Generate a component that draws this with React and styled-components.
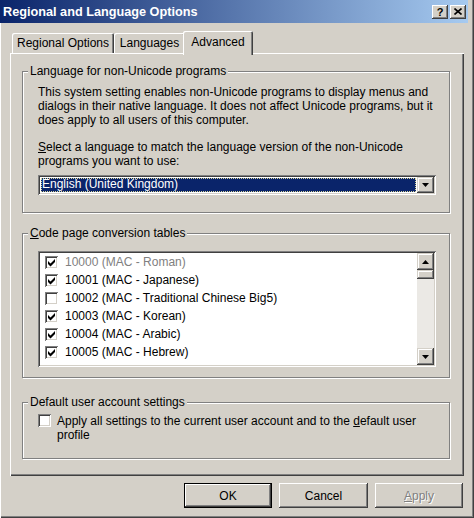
import React from 'react';
import styled, { createGlobalStyle } from 'styled-components';

const FACE = '#d4d0c8';

const GlobalStyle = createGlobalStyle`
  html, body {
    margin: 0;
    padding: 0;
    background: ${FACE};
  }
  body {
    font-family: "Liberation Sans", Arial, sans-serif;
    font-size: 12px;
    color: #000;
  }
`;

// classic 3D edges
const raised = `
  box-shadow: inset -1px -1px 0 #404040, inset 1px 1px 0 #ffffff, inset -2px -2px 0 #808080;
`;
const sunken = `
  box-shadow: inset 1px 1px 0 #808080, inset -1px -1px 0 #ffffff, inset 2px 2px 0 #404040, inset -2px -2px 0 ${FACE};
`;

const Window = styled.div`
  box-sizing: border-box;
  width: 474px;
  height: 518px;
  background: ${FACE};
  display: flex;
  flex-direction: column;
  padding: 0 6px 3px 0;
  box-shadow: inset 1px 0 0 #ffffff, inset -1px -1px 0 #404040, inset -2px -2px 0 #808080;
`;

const TitleBar = styled.div`
  height: 23px;
  display: flex;
  align-items: center;
  padding: 0 2px 0 3px;
  background: linear-gradient(to right, #0a246a, #a6caf0);
`;

const Title = styled.div`
  flex: 1;
  color: #fff;
  font-weight: bold;
  font-size: 12.7px;
  white-space: nowrap;
`;

const CaptionButton = styled.div`
  box-sizing: border-box;
  width: 16px;
  height: 14px;
  margin-left: 2px;
  background: ${FACE};
  ${raised}
  display: flex;
  align-items: center;
  justify-content: center;
  font-weight: bold;
  font-size: 11px;
  line-height: 14px;
`;

const Body = styled.div`
  flex: 1;
  display: flex;
  flex-direction: column;
  padding: 8px 4px 0 10px;
`;

const TabStrip = styled.div`
  height: 22px;
  display: flex;
  align-items: flex-end;
  padding-left: 2px;
  position: relative;
  z-index: 1;
`;

const Tab = styled.div`
  box-sizing: border-box;
  width: ${p => p.$width}px;
  height: ${p => (p.$active ? 24 : 20)}px;
  margin-left: ${p => (p.$active ? -2 : 0)}px;
  margin-right: ${p => (p.$active ? -2 : 0)}px;
  margin-bottom: ${p => (p.$active ? -2 : 0)}px;
  padding-top: ${p => (p.$active ? 4 : 3)}px;
  text-align: center;
  line-height: 14px;
  white-space: nowrap;
  background: ${FACE};
  border-radius: 2px 2px 0 0;
  box-shadow: inset 1px 1px 0 #ffffff, inset -1px 0 0 #404040, inset -2px 0 0 #808080;
`;

const Panel = styled.div`
  box-sizing: border-box;
  height: 423px;
  padding: 18px 14px 0 12px;
  display: flex;
  flex-direction: column;
  box-shadow: inset 1px 1px 0 #ffffff, inset -1px -1px 0 #404040, inset -2px -2px 0 #808080;
`;

const Group = styled.div`
  position: relative;
  box-sizing: border-box;
  height: ${p => p.$height}px;
  margin-top: ${p => p.$top || 0}px;
  padding: ${p => p.$pad};
  border: 1px solid #808080;
  box-shadow: 1px 1px 0 #ffffff, inset 1px 1px 0 #ffffff;
`;

const Legend = styled.span`
  position: absolute;
  top: -8px;
  left: 5px;
  padding: 0 2px;
  line-height: 14px;
  background: ${FACE};
  white-space: nowrap;
`;

const Text = styled.p`
  margin: ${p => p.$top || 0}px 0 0;
  line-height: 14px;
  white-space: nowrap;
`;

const Key = styled.span`
  text-decoration: underline;
`;

const Combo = styled.div`
  box-sizing: border-box;
  height: 20px;
  margin-top: 7px;
  padding: 2px;
  display: flex;
  background: #fff;
  ${sunken}
`;

const ComboValue = styled.div`
  flex: 1;
  margin: 1px;
  padding-left: 1px;
  background: #0a246a;
  color: #fff;
  line-height: 12px;
  outline: 1px dotted #d8d49a;
  outline-offset: -1px;
  white-space: nowrap;
`;

const ArrowButton = styled.div`
  box-sizing: border-box;
  width: 17px;
  height: ${p => p.$h || 16}px;
  flex: none;
  background: ${FACE};
  display: flex;
  align-items: center;
  justify-content: center;
  box-shadow: inset -1px -1px 0 #404040, inset 1px 1px 0 ${FACE}, inset -2px -2px 0 #808080, inset 2px 2px 0 #ffffff;
`;

const ListBox = styled.div`
  box-sizing: border-box;
  height: 116px;
  padding: 2px;
  display: flex;
  background: #fff;
  ${sunken}
`;

const Rows = styled.div`
  flex: 1;
`;

const Row = styled.div`
  height: 18px;
  display: flex;
  align-items: center;
  gap: 7px;
  padding-left: 5px;
  color: ${p => (p.$dim ? '#808080' : '#000')};
  white-space: nowrap;
`;

const Box = styled.div`
  box-sizing: border-box;
  width: 13px;
  height: 13px;
  flex: none;
  background: #fff;
  ${sunken}
`;

const ScrollBar = styled.div`
  width: 17px;
  display: flex;
  flex-direction: column;
`;

const Thumb = styled.div`
  height: 9px;
  background: ${FACE};
  box-shadow: inset -1px -1px 0 #404040, inset 1px 1px 0 ${FACE}, inset -2px -2px 0 #808080, inset 2px 2px 0 #ffffff;
`;

const Track = styled.div`
  flex: 1;
  background: #ebe9e5;
`;

const CheckLine = styled.div`
  display: flex;
  align-items: flex-start;
  gap: 6px;
  margin-top: ${p => p.$top || 0}px;
`;

const ButtonRow = styled.div`
  display: flex;
  justify-content: flex-end;
  gap: 7px;
  margin-top: 7px;
  padding-right: 1px;
`;

const Button = styled.button`
  box-sizing: border-box;
  width: 88px;
  height: 25px;
  padding: 0;
  border: none;
  background: ${FACE};
  font: inherit;
  color: ${p => (p.disabled ? '#808080' : '#000')};
  text-shadow: ${p => (p.disabled ? '1px 1px 0 #ffffff' : 'none')};
  box-shadow: ${p =>
    p.$default
      ? 'inset 0 0 0 1px #000, inset -2px -2px 0 #404040, inset 2px 2px 0 #ffffff, inset -3px -3px 0 #808080'
      : 'inset -1px -1px 0 #404040, inset 1px 1px 0 #ffffff, inset -2px -2px 0 #808080'};
`;

const Arrow = ({ up }) => (
  <svg width="7" height="4" viewBox="0 0 7 4">
    <path d={up ? 'M3.5 0 L7 4 L0 4 Z' : 'M0 0 L7 0 L3.5 4 Z'} fill="#000" />
  </svg>
);

const Check = () => (
  <svg width="13" height="13" viewBox="0 0 13 13">
    <path d="M3 5 L5.5 7.5 L10 3 L10 6 L5.5 10.5 L3 8 Z" fill="#000" />
  </svg>
);

const CloseGlyph = () => (
  <svg width="8" height="7" viewBox="0 0 8 7">
    <path d="M0.5 0.5 L7.5 6.5 M7.5 0.5 L0.5 6.5" stroke="#000" strokeWidth="1.6" />
  </svg>
);

const codePages = [
  { id: '10000', name: 'MAC - Roman', checked: true, dim: true },
  { id: '10001', name: 'MAC - Japanese', checked: true },
  { id: '10002', name: 'MAC - Traditional Chinese Big5', checked: false },
  { id: '10003', name: 'MAC - Korean', checked: true },
  { id: '10004', name: 'MAC - Arabic', checked: true },
  { id: '10005', name: 'MAC - Hebrew', checked: true },
];

export default function App() {
  return (
    <>
      <GlobalStyle />
      <Window>
        <TitleBar>
          <Title>Regional and Language Options</Title>
          <CaptionButton>?</CaptionButton>
          <CaptionButton><CloseGlyph /></CaptionButton>
        </TitleBar>

        <Body>
          <TabStrip>
            <Tab $width={102}>Regional Options</Tab>
            <Tab $width={71}>Languages</Tab>
            <Tab $width={70} $active>Advanced</Tab>
          </TabStrip>

          <Panel>
            <Group $height={142} $pad="13px 13px 0 15px">
              <Legend>Language for non-Unicode programs</Legend>
              <Text>
                This system setting enables non-Unicode programs to display menus and<br />
                dialogs in their native language. It does not affect Unicode programs, but it<br />
                does apply to all users of this computer.
              </Text>
              <Text $top={13}>
                <Key>S</Key>elect a language to match the language version of the non-Unicode<br />
                programs you want to use:
              </Text>
              <Combo>
                <ComboValue>English (United Kingdom)</ComboValue>
                <ArrowButton><Arrow /></ArrowButton>
              </Combo>
            </Group>

            <Group $height={145} $top={20} $pad="17px 13px 0 15px">
              <Legend><Key>C</Key>ode page conversion tables</Legend>
              <ListBox>
                <Rows>
                  {codePages.map(cp => (
                    <Row key={cp.id} $dim={cp.dim}>
                      <Box>{cp.checked && <Check />}</Box>
                      {cp.id} ({cp.name})
                    </Row>
                  ))}
                </Rows>
                <ScrollBar>
                  <ArrowButton $h={17}><Arrow up /></ArrowButton>
                  <Thumb />
                  <Track />
                  <ArrowButton $h={17}><Arrow /></ArrowButton>
                </ScrollBar>
              </ListBox>
            </Group>

            <Group $height={57} $top={24} $pad="11px 13px 0 15px">
              <Legend>Default user account settings</Legend>
              <CheckLine>
                <Box />
                <Text>
                  Apply all settings to the current user account and to the <Key>d</Key>efault user<br />
                  profile
                </Text>
              </CheckLine>
            </Group>
          </Panel>

          <ButtonRow>
            <Button $default>OK</Button>
            <Button style={{ width: 89 }}>Cancel</Button>
            <Button disabled><Key>A</Key>pply</Button>
          </ButtonRow>
        </Body>
      </Window>
    </>
  );
}
